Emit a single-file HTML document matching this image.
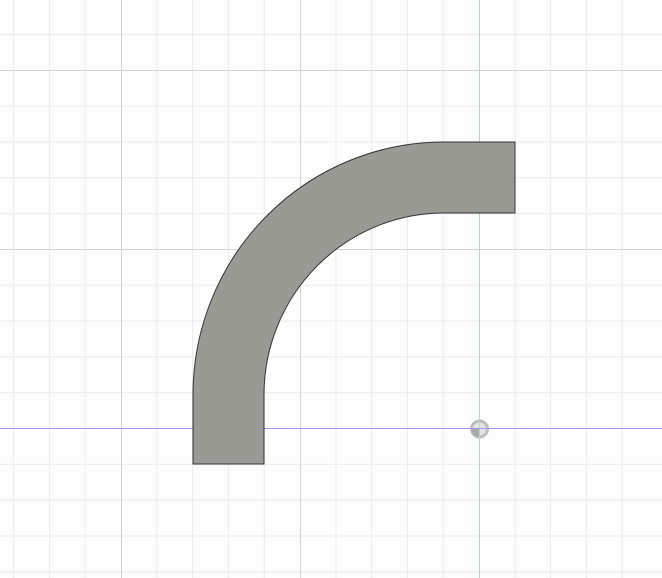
<!DOCTYPE html>
<html><head><style>html,body{margin:0;padding:0;background:#fdfdfd;}svg{display:block}</style></head>
<body>
<svg width="662" height="578" viewBox="0 0 662 578" xmlns="http://www.w3.org/2000/svg">
<rect width="662" height="578" fill="#fdfdfd"/>
<g stroke="#ebebeb" stroke-width="1">
<line x1="13.6" y1="0" x2="13.6" y2="578"/><line x1="49.4" y1="0" x2="49.4" y2="578"/><line x1="85.2" y1="0" x2="85.2" y2="578"/>
<line x1="157" y1="0" x2="157" y2="578"/><line x1="192.6" y1="0" x2="192.6" y2="578"/><line x1="228.4" y1="0" x2="228.4" y2="578"/><line x1="264.2" y1="0" x2="264.2" y2="578"/>
<line x1="336" y1="0" x2="336" y2="578"/><line x1="371.6" y1="0" x2="371.6" y2="578"/><line x1="407.4" y1="0" x2="407.4" y2="578"/><line x1="443.2" y1="0" x2="443.2" y2="578"/>
<line x1="515" y1="0" x2="515" y2="578"/><line x1="550.6" y1="0" x2="550.6" y2="578"/><line x1="586.4" y1="0" x2="586.4" y2="578"/><line x1="622.2" y1="0" x2="622.2" y2="578"/>
<line x1="0" y1="34.6" x2="662" y2="34.6"/><line x1="0" y1="106.2" x2="662" y2="106.2"/><line x1="0" y1="142" x2="662" y2="142"/><line x1="0" y1="177.8" x2="662" y2="177.8"/><line x1="0" y1="213.6" x2="662" y2="213.6"/>
<line x1="0" y1="285.2" x2="662" y2="285.2"/><line x1="0" y1="321" x2="662" y2="321"/><line x1="0" y1="356.8" x2="662" y2="356.8"/><line x1="0" y1="392.6" x2="662" y2="392.6"/>
<line x1="0" y1="464.4" x2="662" y2="464.4"/><line x1="0" y1="500.2" x2="662" y2="500.2"/><line x1="0" y1="536" x2="662" y2="536"/><line x1="0" y1="571.8" x2="662" y2="571.8"/>
</g>
<g stroke="#d2d2d2" stroke-width="1">
<line x1="121.5" y1="0" x2="121.5" y2="578"/><line x1="300.5" y1="0" x2="300.5" y2="578"/>
<line x1="0" y1="70.5" x2="662" y2="70.5"/><line x1="0" y1="249.5" x2="662" y2="249.5"/>
</g>
<line x1="479.5" y1="0" x2="479.5" y2="578" stroke="#a8e6a8" stroke-width="1"/>
<line x1="0" y1="428.5" x2="662" y2="428.5" stroke="#9a9af0" stroke-width="1"/>
<path d="M193 464 L193 395 A251 253 0 0 1 444 142 L515 142 L515 213 L444 213 A180 182 0 0 0 264 395 L264 464 Z" fill="#9a9a94" stroke="#333" stroke-width="1"/>
<circle cx="479.5" cy="429" r="8" fill="#e4e4e4" stroke="#bdbdbd" stroke-width="3"/>
<path d="M479.5 429 L471.5 429 A8 8 0 0 0 479.5 437 Z" fill="#aaa"/>
<line x1="479.5" y1="419" x2="479.5" y2="439" stroke="#a8e6a8"/>
<line x1="469" y1="428.5" x2="490" y2="428.5" stroke="#9a9af0"/>
</svg>
</body></html>
